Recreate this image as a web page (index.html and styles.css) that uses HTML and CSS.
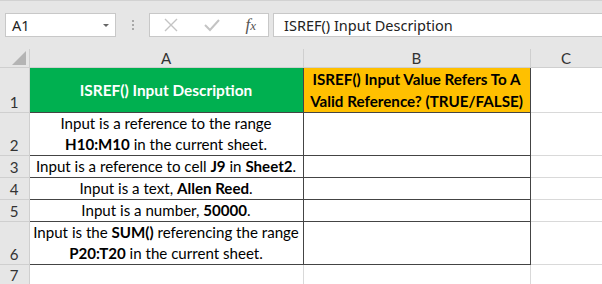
FILE: index.html
```html
<!DOCTYPE html>
<html lang="en">
<head>
  <meta charset="UTF-8">
  <title>ISREF Sheet</title>
  <link rel="stylesheet" href="styles.css">
</head>
<body>
  <!-- Formula bar -->
  <div class="formula-bar">
    <div class="name-box">
      <span>A1</span>
      <span class="caret"></span>
    </div>
    <div class="grip">
      <span></span><span></span><span></span>
    </div>
    <div class="fx-buttons">
      <svg class="icon" width="14" height="14" viewBox="0 0 14 14">
        <path d="M1 1 L13 13 M13 1 L1 13" stroke="#c4c4c4" stroke-width="1.4" fill="none"/>
      </svg>
      <svg class="icon" width="16" height="14" viewBox="0 0 16 14">
        <path d="M1 7 L6 12 L15 2" stroke="#c4c4c4" stroke-width="2" fill="none"/>
      </svg>
      <span class="fx">f<i>x</i></span>
    </div>
    <div class="formula-input">ISREF() Input Description</div>
  </div>

  <!-- Sheet -->
  <table class="sheet">
    <colgroup>
      <col class="col-rh">
      <col class="col-a">
      <col class="col-b">
      <col class="col-c">
    </colgroup>
    <tr class="col-heads">
      <th class="corner"><span class="tri"></span></th>
      <th>A</th>
      <th>B</th>
      <th>C</th>
    </tr>
    <tr class="tall">
      <th class="rh">1</th>
      <td class="head-green">ISREF() Input Description</td>
      <td class="head-orange">ISREF() Input Value Refers To A<br>Valid Reference? (TRUE/FALSE)</td>
      <td></td>
    </tr>
    <tr class="tall">
      <th class="rh">2</th>
      <td class="data">Input is a reference to the range<br><b>H10:M10</b> in the current sheet.</td>
      <td class="data"></td>
      <td></td>
    </tr>
    <tr>
      <th class="rh">3</th>
      <td class="data">Input is a reference to cell <b>J9</b> in <b>Sheet2</b>.</td>
      <td class="data"></td>
      <td></td>
    </tr>
    <tr>
      <th class="rh">4</th>
      <td class="data">Input is a text, <b>Allen Reed</b>.</td>
      <td class="data"></td>
      <td></td>
    </tr>
    <tr>
      <th class="rh">5</th>
      <td class="data">Input is a number, <b>50000</b>.</td>
      <td class="data"></td>
      <td></td>
    </tr>
    <tr class="tall">
      <th class="rh">6</th>
      <td class="data">Input is the <b>SUM()</b> referencing the range<br><b>P20:T20</b> in the current sheet.</td>
      <td class="data"></td>
      <td></td>
    </tr>
    <tr>
      <th class="rh">7</th>
      <td></td>
      <td></td>
      <td></td>
    </tr>
  </table>
</body>
</html>
```

FILE: styles.css
```css
body {
  margin: 0;
  width: 602px;
  height: 284px;
  overflow: hidden;
  background: #ffffff;
  font-family: "Lato", "Noto Sans", sans-serif;
}

.formula-bar {
  display: flex;
  align-items: stretch;
  height: 24px;
  padding: 12px 0 12px 5px;
  background: #e6e6e6;
  border-top: 1px solid #d2d2d2;
  box-sizing: content-box;
}

.name-box {
  width: 111px;
  display: flex;
  align-items: center;
  justify-content: space-between;
  padding: 0 6px 0 6px;
  box-sizing: border-box;
  background: #fff;
  border: 1px solid #c8c8c8;
  font-family: "Noto Sans", sans-serif;
  font-size: 14.5px;
  color: #222;

  .caret {
    width: 0;
    height: 0;
    border-left: 3px solid transparent;
    border-right: 3px solid transparent;
    border-top: 3px solid #666;
  }
}

.grip {
  width: 33px;
  display: flex;
  flex-direction: column;
  align-items: center;
  justify-content: center;
  gap: 2px;

  span {
    width: 2px;
    height: 2px;
    background: #a8a8a8;
  }
}

.fx-buttons {
  width: 120px;
  display: flex;
  align-items: center;
  justify-content: space-between;
  padding: 0 12px 0 14px;
  box-sizing: border-box;
  background: #fff;
  border: 1px solid #c8c8c8;

  .fx {
    font-family: "Liberation Serif", serif;
    font-style: italic;
    font-size: 17px;
    color: #555;

    i {
      font-size: 13px;
    }
  }
}

.formula-input {
  flex: 1;
  margin-left: 4px;
  padding-left: 10px;
  display: flex;
  align-items: center;
  background: #fff;
  border: 1px solid #c8c8c8;
  border-right: none;
  font-family: "Noto Sans", sans-serif;
  font-size: 14.5px;
  color: #222;
}

.sheet {
  border-collapse: collapse;
  table-layout: fixed;
  width: 602px;

  .col-rh { width: 29px; }
  .col-a { width: 274px; }
  .col-b { width: 227px; }
  .col-c { width: 72px; }

  th, td {
    padding: 0;
    height: 20px;
    border: 1px solid #d9d9d9;
    font-size: 15.1px;
    color: #000;
    text-align: center;
    vertical-align: bottom;
    line-height: 20px;
    white-space: nowrap;
  }

  tr.tall th, tr.tall td {
    height: 41px;
  }

  th {
    background: #e6e6e6;
    font-weight: normal;
    color: #333;
    border-color: #cfcfcf;
  }

  .col-heads th {
    height: 18px;
    line-height: 18px;
    vertical-align: middle;
    border-top: none;
  }

  th:first-child {
    border-left: none;
  }

  .corner {
    position: relative;

    .tri {
      position: absolute;
      right: 3px;
      bottom: 2px;
      width: 0;
      height: 0;
      border-left: 14px solid transparent;
      border-bottom: 14px solid #b4b4b4;
    }
  }

  .head-green,
  .head-orange {
    font-weight: bold;
    vertical-align: middle;
    border: 1px solid #444;
    line-height: 22px;
  }

  .head-green {
    background: #00b050;
    color: #fff;
    font-size: 15.4px;
  }

  .head-orange {
    background: #ffc000;
    font-size: 15.2px;
  }

  .data {
    border: 1px solid #444;
    line-height: 21px;
  }
}
```
